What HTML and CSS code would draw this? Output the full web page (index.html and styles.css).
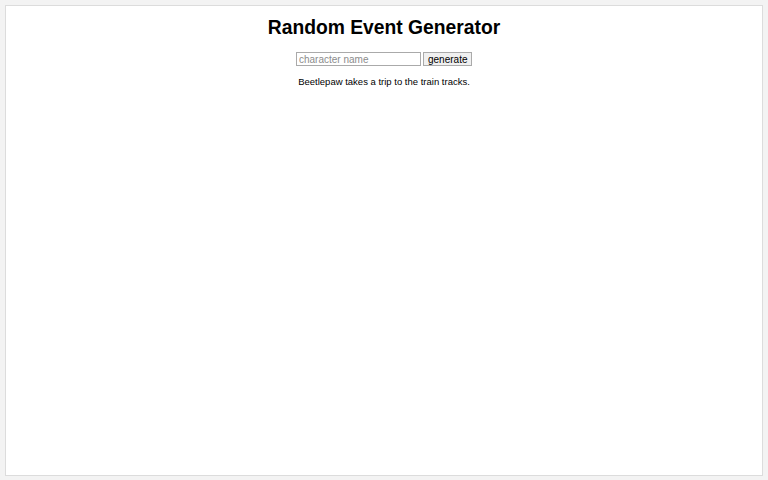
FILE: index.html
```html
<!DOCTYPE html>
<html lang="en">
  <head>
    <meta charset="UTF-8" />
    <meta name="viewport" content="width=device-width" />
    <title>Random Event Generator</title>
    <link rel="stylesheet" href="styles.css">
  </head>
  <body>
    <div class="container">
      <h1>Random Event Generator</h1>
      <form id="event-form" class="event-form">
        <input type="text" id="char_name" placeholder="character name" />
        <button type="submit" class="btn">generate</button>
      </form>
      <p id="event-output" class="event-output">Beetlepaw takes a trip to the train tracks.</p>
    </div>
  </body>
</html>
```

FILE: styles.css
```css
body {
  font-family: "Liberation Sans", Arial, sans-serif;
  background-color: #f3f3f3;
  margin: 0;
  padding: 5px;
}

.container {
  height: 471px;
  box-sizing: border-box;
  background-color: white;
  border: 1px solid #dcdcdc;
  text-align: center;
  padding-top: 11px;
}

h1 {
  font-size: 19.3px;
  line-height: 22px;
  margin: 0 0 13px;
  color: #000;
}

.event-form {
  display: flex;
  justify-content: center;
  gap: 2px;
  margin: 0;
}

.event-form input {
  font-family: inherit;
  font-size: 10px;
  width: 125px;
  height: 14px;
  box-sizing: border-box;
  padding: 0 2px;
  border: 1px solid #aaa;
}

.event-form input::placeholder {
  color: #8c8c8c;
}

.btn {
  font-family: inherit;
  font-size: 10px;
  width: 49px;
  height: 14px;
  box-sizing: border-box;
  padding: 0 4px;
  border: 1px solid #aaa;
  background-color: #f0f0f0;
  color: #000;
}

.event-output {
  font-size: 9.5px;
  line-height: 11px;
  margin: 10px 0 0;
}
```
